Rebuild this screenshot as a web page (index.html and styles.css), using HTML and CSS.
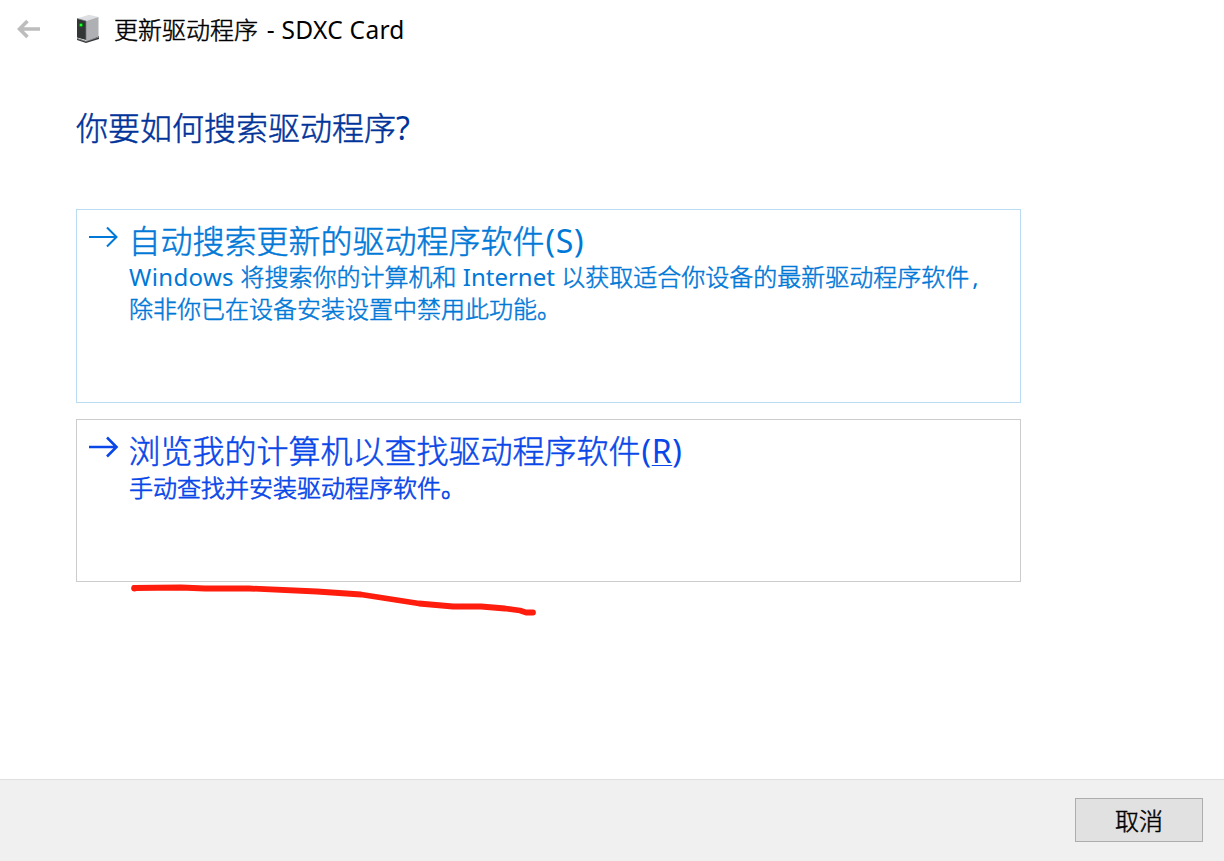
FILE: index.html
```html
<!DOCTYPE html>
<html lang="zh-CN">
<head>
<meta charset="utf-8">
<title>更新驱动程序 - SDXC Card</title>
<link rel="stylesheet" href="styles.css">
</head>
<body>
<div class="window">
  <header class="titlebar">
    <svg class="back" width="24" height="20" viewBox="0 0 24 20"><path d="M23 10H3M10.500 2 2.500 10l8 8" fill="none" stroke="#bdbdbd" stroke-width="3.600"/></svg>
    <svg class="device" width="24" height="30" viewBox="0 0 24 30">
      <path d="M1 24 10 27 23 22v3l-13 4-9-3z" fill="#35383a"/>
      <path d="M1 4.500 13 .700 22.500 3 10 7z" fill="#dedfe2"/>
      <path d="M10 7 22.500 3v19.500L10 27z" fill="#aeb0b4"/>
      <path d="M1 4.500 10 7v19L1 23.500z" fill="#333637"/>
      <path d="M1 4.500 10 7v19" fill="none" stroke="#777a7c" stroke-width=".7"/>
      <path d="M1 24.500 10 27.300 23 23" fill="none" stroke="#a0a2a4" stroke-width=".7"/>
      <circle cx="5" cy="11" r="2.200" fill="#087e12"/><circle cx="5" cy="11" r="1.300" fill="#20ff30"/>
    </svg>
    <span class="caption">更新驱动程序<span class="latin caption-latin"> - SDXC Card</span></span>
  </header>
  <main class="content">
    <h1 class="heading">你要如何搜索驱动程序<span class="latin">?</span></h1>
    <section class="option option-auto">
      <svg class="arrow" width="30" height="22" viewBox="0 0 30 22"><path d="M0 11h28M18 1.500l9.500 9.500L18 20.500" fill="none" stroke="currentColor" stroke-width="2"/></svg>
      <div class="text">
        <h2 class="label">自动搜索更新的驱动程序软件<span class="latin">(S)</span></h2>
        <p class="note"><span class="latin windows">Windows </span>将搜索你的计算机和<span class="latin internet"> Internet </span>以获取适合你设备的最新驱动程序软件<span class="latin comma">,</span><br>除非你已在设备安装设置中禁用此功能。</p>
      </div>
    </section>
    <section class="option option-browse">
      <svg class="arrow" width="30" height="22" viewBox="0 0 30 22"><path d="M0 11h28M18 1.500l9.500 9.500L18 20.500" fill="none" stroke="currentColor" stroke-width="2.600"/></svg>
      <div class="text">
        <h2 class="label">浏览我的计算机以查找驱动程序软件<span class="latin">(<span class="key">R</span>)</span></h2>
        <p class="note note-strong">手动查找并安装驱动程序软件。</p>
      </div>
    </section>
    <svg class="marker" width="410" height="40" viewBox="130 580 410 40"><path d="M134.500 588 181 587.500 205 588.500H249L317 591.500 361 594.500 419 603.500 453 606.500H481L505 608.500 520 610.500 526 612.500H533" fill="none" stroke="#ff1d0d" stroke-width="5.800" stroke-linecap="round" stroke-linejoin="round"/><circle cx="134.500" cy="588.300" r="3.200" fill="#ff1d0d"/></svg>
  </main>
  <footer class="footer"><button class="cancel">取消</button></footer>
</div>
</body>
</html>
```
FILE: styles.css
```css
* { box-sizing: border-box; }
body {
  margin: 0;
  background: #fff;
  font-family: "Noto Sans CJK SC", "Noto Sans", sans-serif;
  font-weight: 300;
  -webkit-text-stroke: .5px currentColor;
}
h1, h2, p { margin: 0; font-weight: inherit; }
svg { display: block; flex: none; }
.latin { font-family: "Noto Sans", sans-serif; font-weight: 400; white-space: pre; line-height: 1; -webkit-text-stroke: 0; }
.window { height: 861px; display: flex; flex-direction: column; }
.titlebar { height: 60px; display: flex; align-items: center; padding-left: 17px; color: #000; }
.back { margin-top: -2px; }
.device { margin-left: 35px; margin-top: -2px; }
.caption { margin: -2px 0 0 14px; font-size: 24px; line-height: 36px; white-space: nowrap; }
.caption-latin { margin-left: 2px; letter-spacing: .3px; font-size: 24.500px; }
.content { flex: 1; padding: 42px 0 0 76px; position: relative; }
.heading { height: 107px; font-size: 32px; line-height: 48px; color: #003399; }
.option { width: 945px; display: flex; border: 1px solid; padding: 9px 0 0 12px; }
.option-auto { height: 194px; border-color: #badcf3; color: #0078d7; margin-bottom: 16px; }
.option-browse { height: 163px; border-color: #cccccc; color: #0a47e8; }
.arrow { margin-top: 7px; }
.text { margin-left: 10px; white-space: nowrap; }
.label { margin-left: -.5px; font-size: 32px; line-height: 40px; height: 41px; }
.label .latin { margin-left: 1px; letter-spacing: .6px; font-size: 32px; }
.note { font-size: 24px; line-height: 32px; }
.windows { letter-spacing: .35px; }
.internet { letter-spacing: 0; }
.comma { margin-left: 3px; }
.note-strong { padding-top: 1px; -webkit-text-stroke-width: .7px; }
.key { text-decoration: underline; text-decoration-thickness: 1px; text-underline-offset: 2px; }
.marker { position: absolute; left: 130px; top: 520px; }
.footer { height: 82px; background: #f0f0f0; border-top: 1px solid #dfdfdf; display: flex; justify-content: flex-end; padding: 18px 21px 0 0; }
.cancel { width: 128px; height: 44px; border: 1px solid #adadad; background: #e1e1e1; padding: 0; font: 300 24px/40px "Noto Sans CJK SC", sans-serif; color: #000; -webkit-text-stroke: .5px #000; }
```
